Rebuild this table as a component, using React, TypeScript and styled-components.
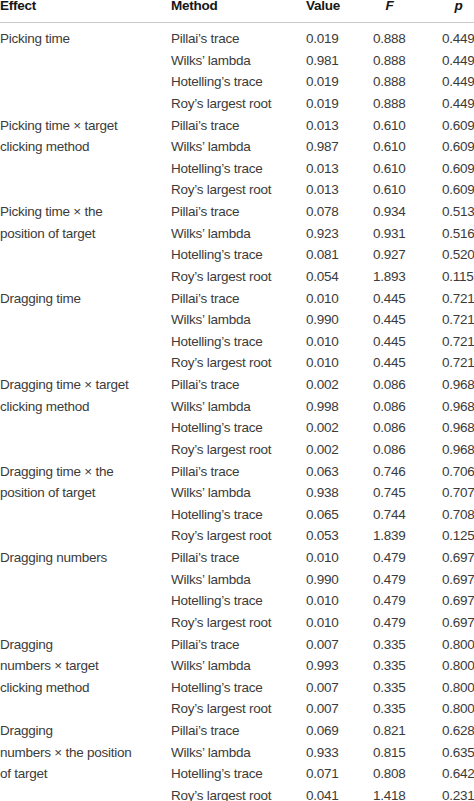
import React from "react";
import styled, { createGlobalStyle } from "styled-components";

const GlobalStyle = createGlobalStyle`
	html, body {
		margin: 0;
		padding: 0;
		background: #ffffff;
		overflow: hidden;
	}
	body {
		font-family: "Liberation Sans", Arial, sans-serif;
	}
`;

const ROW_H = "21.63px";
const COLUMNS = "171px 135px 67px 69px 1fr";

const TableWrap = styled.div`
	width: 474px;
	font-size: 13.5px;
	letter-spacing: -0.25px;
	color: #3b3b3b;
	white-space: nowrap;
`;

const HeaderRow = styled.div`
	display: grid;
	grid-template-columns: ${COLUMNS};
	height: ${ROW_H};
	line-height: ${ROW_H};
	margin-top: -5px;
	padding-bottom: 5.4px;
	border-bottom: 1px solid #c9c9c9;
	font-weight: 700;
	color: #161616;
`;

const HeadCell = styled.div<{ $center?: boolean; $italic?: boolean }>`
	text-align: ${(p) => (p.$center ? "center" : "left")};
	font-style: ${(p) => (p.$italic ? "italic" : "normal")};
	width: ${(p) => (p.$center ? "33px" : "auto")};
`;

const Body = styled.div`
	padding-top: 5px;
`;

const Group = styled.div`
	display: grid;
	grid-template-columns: ${COLUMNS};
	grid-auto-rows: ${ROW_H};
	line-height: ${ROW_H};
`;

const EffectCell = styled.div`
	grid-row: span 4;
	white-space: pre-line;
`;

const Cell = styled.div``;

type Row = [string, string, string, string];

type Effect = {
	label: string;
	rows: Row[];
};

const methods = ["Pillai’s trace", "Wilks’ lambda", "Hotelling’s trace", "Roy’s largest root"];

function rows(values: [string, string, string][]): Row[] {
	return values.map((v, i) => [methods[i], v[0], v[1], v[2]]);
}

const effects: Effect[] = [
	{
		label: "Picking time",
		rows: rows([
			["0.019", "0.888", "0.449"],
			["0.981", "0.888", "0.449"],
			["0.019", "0.888", "0.449"],
			["0.019", "0.888", "0.449"],
		]),
	},
	{
		label: "Picking time × target\nclicking method",
		rows: rows([
			["0.013", "0.610", "0.609"],
			["0.987", "0.610", "0.609"],
			["0.013", "0.610", "0.609"],
			["0.013", "0.610", "0.609"],
		]),
	},
	{
		label: "Picking time × the\nposition of target",
		rows: rows([
			["0.078", "0.934", "0.513"],
			["0.923", "0.931", "0.516"],
			["0.081", "0.927", "0.520"],
			["0.054", "1.893", "0.115"],
		]),
	},
	{
		label: "Dragging time",
		rows: rows([
			["0.010", "0.445", "0.721"],
			["0.990", "0.445", "0.721"],
			["0.010", "0.445", "0.721"],
			["0.010", "0.445", "0.721"],
		]),
	},
	{
		label: "Dragging time × target\nclicking method",
		rows: rows([
			["0.002", "0.086", "0.968"],
			["0.998", "0.086", "0.968"],
			["0.002", "0.086", "0.968"],
			["0.002", "0.086", "0.968"],
		]),
	},
	{
		label: "Dragging time × the\nposition of target",
		rows: rows([
			["0.063", "0.746", "0.706"],
			["0.938", "0.745", "0.707"],
			["0.065", "0.744", "0.708"],
			["0.053", "1.839", "0.125"],
		]),
	},
	{
		label: "Dragging numbers",
		rows: rows([
			["0.010", "0.479", "0.697"],
			["0.990", "0.479", "0.697"],
			["0.010", "0.479", "0.697"],
			["0.010", "0.479", "0.697"],
		]),
	},
	{
		label: "Dragging\nnumbers × target\nclicking method",
		rows: rows([
			["0.007", "0.335", "0.800"],
			["0.993", "0.335", "0.800"],
			["0.007", "0.335", "0.800"],
			["0.007", "0.335", "0.800"],
		]),
	},
	{
		label: "Dragging\nnumbers × the position\nof target",
		rows: rows([
			["0.069", "0.821", "0.628"],
			["0.933", "0.815", "0.635"],
			["0.071", "0.808", "0.642"],
			["0.041", "1.418", "0.231"],
		]),
	},
];

export default function App() {
	return (
		<TableWrap>
			<GlobalStyle />
			<HeaderRow>
				<HeadCell>Effect</HeadCell>
				<HeadCell>Method</HeadCell>
				<HeadCell>Value</HeadCell>
				<HeadCell $center $italic>
					F
				</HeadCell>
				<HeadCell $center $italic>
					p
				</HeadCell>
			</HeaderRow>
			<Body>
				{effects.map((effect, i) => (
					<Group key={i}>
						<EffectCell>{effect.label}</EffectCell>
						{effect.rows.map((row, j) =>
							row.map((cell, k) => <Cell key={`${j}-${k}`}>{cell}</Cell>)
						)}
					</Group>
				))}
			</Body>
		</TableWrap>
	);
}
